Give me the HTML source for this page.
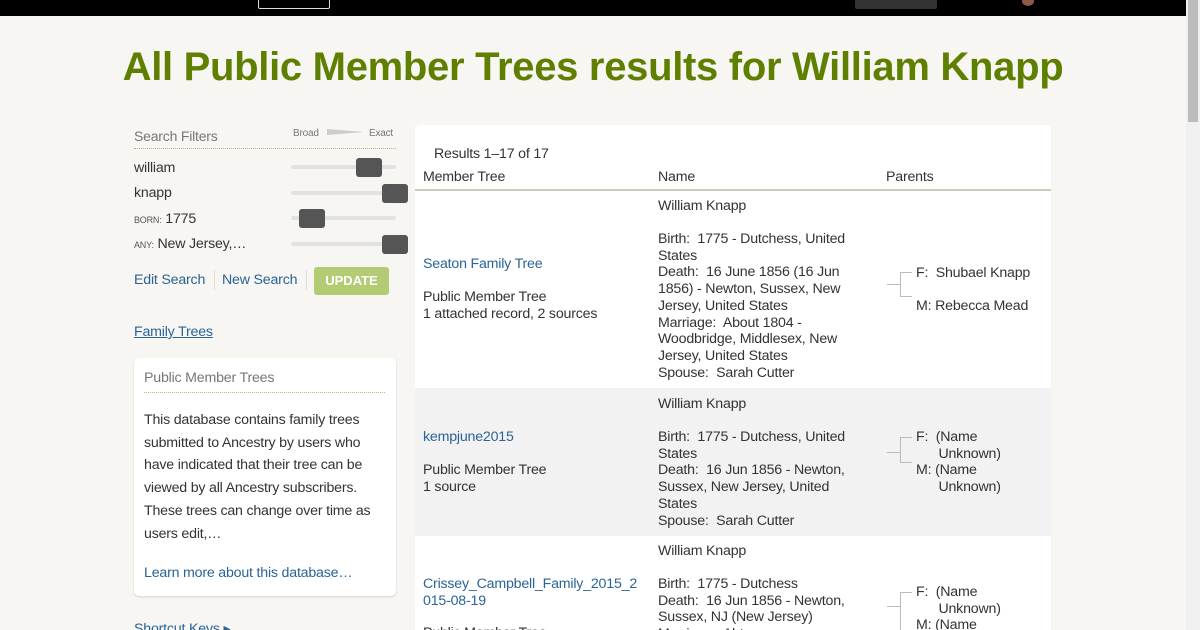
<!DOCTYPE html>
<html><head><meta charset="utf-8"><style>
*{margin:0;padding:0;box-sizing:border-box}
html,body{width:1200px;height:630px;overflow:hidden}
body{background:#f7f6f2;font-family:"Liberation Sans",sans-serif;color:#333;position:relative}
.t{position:absolute;white-space:nowrap;font-size:14.2px;line-height:16.7px;letter-spacing:-0.2px}
.l{color:#2a6496}
.g{color:#777}
</style></head><body>
<div style="position:absolute;left:0;top:0;width:1186px;height:16px;background:#000"></div>
<div style="position:absolute;left:258px;top:-6px;width:72px;height:15px;border:1px solid #ddd;border-radius:2px"></div>
<div style="position:absolute;left:855px;top:-4px;width:82px;height:13px;background:#333;border-radius:2px"></div>
<div style="position:absolute;left:1022px;top:-4px;width:12px;height:10px;background:#8a5a4a;border-radius:50%"></div>
<div style="position:absolute;left:1186px;top:0;width:14px;height:630px;background:#f0f0f0"></div>
<div style="position:absolute;left:1188px;top:0;width:10px;height:122px;background:#bcbcbc"></div>

<div style="position:absolute;left:0;width:1186px;top:45px;text-align:center;font-size:40px;font-weight:bold;color:#5f7f00;letter-spacing:-0.3px">All Public Member Trees results for William Knapp</div>

<div class="t g" style="left:134px;top:128px;font-size:14px">Search Filters</div>
<div class="t g" style="left:293px;top:126px;font-size:10px">Broad</div>
<div style="position:absolute;left:327px;top:129px;width:0;height:0;border-top:3px solid transparent;border-bottom:3px solid transparent;border-left:37px solid #ccc"></div>
<div class="t g" style="left:369px;top:126px;font-size:10px">Exact</div>
<div style="position:absolute;left:134px;top:148px;width:262px;border-top:1px dotted #b8b878"></div>
<div class="t" style="left:134px;top:160px">william</div>
<div class="t" style="left:134px;top:185px">knapp</div>
<div class="t" style="left:134px;top:211px"><span style="font-size:9px;color:#555">BORN:</span> 1775</div>
<div class="t" style="left:134px;top:236px"><span style="font-size:9px;color:#555">ANY:</span> New Jersey,…</div>
<div style="position:absolute;left:291px;top:165px;width:105px;height:4px;background:#e2e2e2;border-radius:2px"></div>
<div style="position:absolute;left:291px;top:191px;width:105px;height:4px;background:#e2e2e2;border-radius:2px"></div>
<div style="position:absolute;left:291px;top:216px;width:105px;height:4px;background:#e2e2e2;border-radius:2px"></div>
<div style="position:absolute;left:291px;top:242px;width:105px;height:4px;background:#e2e2e2;border-radius:2px"></div>
<div style="position:absolute;left:356px;top:158px;width:26px;height:19px;background:#555;border-radius:3px"></div>
<div style="position:absolute;left:382px;top:184px;width:26px;height:19px;background:#555;border-radius:3px"></div>
<div style="position:absolute;left:299px;top:209px;width:26px;height:19px;background:#555;border-radius:3px"></div>
<div style="position:absolute;left:382px;top:235px;width:26px;height:19px;background:#555;border-radius:3px"></div>
<div class="t l" style="left:134px;top:272px">Edit Search</div>
<div style="position:absolute;left:214px;top:270px;height:20px;border-left:1px solid #ddd"></div>
<div class="t l" style="left:222px;top:272px">New Search</div>
<div style="position:absolute;left:306px;top:270px;height:20px;border-left:1px solid #ddd"></div>
<div style="position:absolute;left:314px;top:267px;width:75px;height:28px;background:#b3cb72;border-radius:3px;color:#fff;font-weight:bold;font-size:13px;text-align:center;line-height:27px">UPDATE</div>
<div class="t l" style="left:134px;top:324px;text-decoration:underline">Family Trees</div>

<div style="position:absolute;left:134px;top:358px;width:262px;height:238px;background:#fff;border-radius:5px;box-shadow:0 1px 2px rgba(0,0,0,.15)"></div>
<div class="t g" style="left:144px;top:370px">Public Member Trees</div>
<div style="position:absolute;left:144px;top:392px;width:241px;border-top:1px dotted #b8b878"></div>
<div class="t" style="left:144px;top:409px;line-height:22.7px">This database contains family trees<br>submitted to Ancestry by users who<br>have indicated that their tree can be<br>viewed by all Ancestry subscribers.<br>These trees can change over time as<br>users edit,…</div>
<div class="t l" style="left:144px;top:565px">Learn more about this database…</div>
<div class="t l" style="left:134px;top:621px">Shortcut Keys ▸</div>

<div style="position:absolute;left:415px;top:125px;width:636px;height:520px;background:#fff;border-radius:5px"></div>
<div style="position:absolute;left:415px;top:388px;width:636px;height:148px;background:#f2f2f2"></div>
<div class="t" style="left:434px;top:146px">Results 1–17 of 17</div>
<div class="t" style="left:423px;top:169px">Member Tree</div>
<div class="t" style="left:658px;top:169px">Name</div>
<div class="t" style="left:886px;top:169px">Parents</div>
<div style="position:absolute;left:415px;top:189px;width:636px;border-top:2px solid #ccc8bc"></div>

<div class="t" style="left:658px;top:198px">William Knapp</div>
<div class="t" style="left:658px;top:231px">Birth:&nbsp; 1775 - Dutchess, United<br>States<br>Death:&nbsp; 16 June 1856 (16 Jun<br>1856) - Newton, Sussex, New<br>Jersey, United States<br>Marriage:&nbsp; About 1804 -<br>Woodbridge, Middlesex, New<br>Jersey, United States<br>Spouse:&nbsp; Sarah Cutter</div>
<div class="t l" style="left:423px;top:256px">Seaton Family Tree</div>
<div class="t" style="left:423px;top:289px">Public Member Tree<br>1 attached record, 2 sources</div>
<div class="t" style="left:916px;top:265px">F:&nbsp; Shubael Knapp</div>
<div class="t" style="left:916px;top:298px">M: Rebecca Mead</div>
<div style="position:absolute;left:887px;top:284px;width:14px;border-top:1px solid #bbb"></div>
<div style="position:absolute;left:900px;top:272px;width:12px;height:25px;border:1px solid #bbb;border-right:none"></div>

<div class="t" style="left:658px;top:396px">William Knapp</div>
<div class="t" style="left:658px;top:429px">Birth:&nbsp; 1775 - Dutchess, United<br>States<br>Death:&nbsp; 16 Jun 1856 - Newton,<br>Sussex, New Jersey, United<br>States<br>Spouse:&nbsp; Sarah Cutter</div>
<div class="t l" style="left:423px;top:429px">kempjune2015</div>
<div class="t" style="left:423px;top:462px">Public Member Tree<br>1 source</div>
<div class="t" style="left:916px;top:429px">F:&nbsp; (Name<br>&nbsp;&nbsp;&nbsp;&nbsp;&nbsp; Unknown)<br>M: (Name<br>&nbsp;&nbsp;&nbsp;&nbsp;&nbsp; Unknown)</div>
<div style="position:absolute;left:887px;top:452px;width:14px;border-top:1px solid #bbb"></div>
<div style="position:absolute;left:900px;top:437px;width:12px;height:26px;border:1px solid #bbb;border-right:none"></div>

<div class="t" style="left:658px;top:543px">William Knapp</div>
<div class="t" style="left:658px;top:576px">Birth:&nbsp; 1775 - Dutchess<br>Death:&nbsp; 16 Jun 1856 - Newton,<br>Sussex, NJ (New Jersey)<br>Marriage:&nbsp; Abt</div>
<div class="t l" style="left:423px;top:576px">Crissey_Campbell_Family_2015_2<br>015-08-19</div>
<div class="t" style="left:423px;top:625px">Public Member Tree</div>
<div class="t" style="left:916px;top:584px">F:&nbsp; (Name<br>&nbsp;&nbsp;&nbsp;&nbsp;&nbsp; Unknown)<br>M: (Name</div>
<div style="position:absolute;left:887px;top:606px;width:14px;border-top:1px solid #bbb"></div>
<div style="position:absolute;left:900px;top:592px;width:12px;height:40px;border:1px solid #bbb;border-right:none;border-bottom:none"></div>
</body></html>
